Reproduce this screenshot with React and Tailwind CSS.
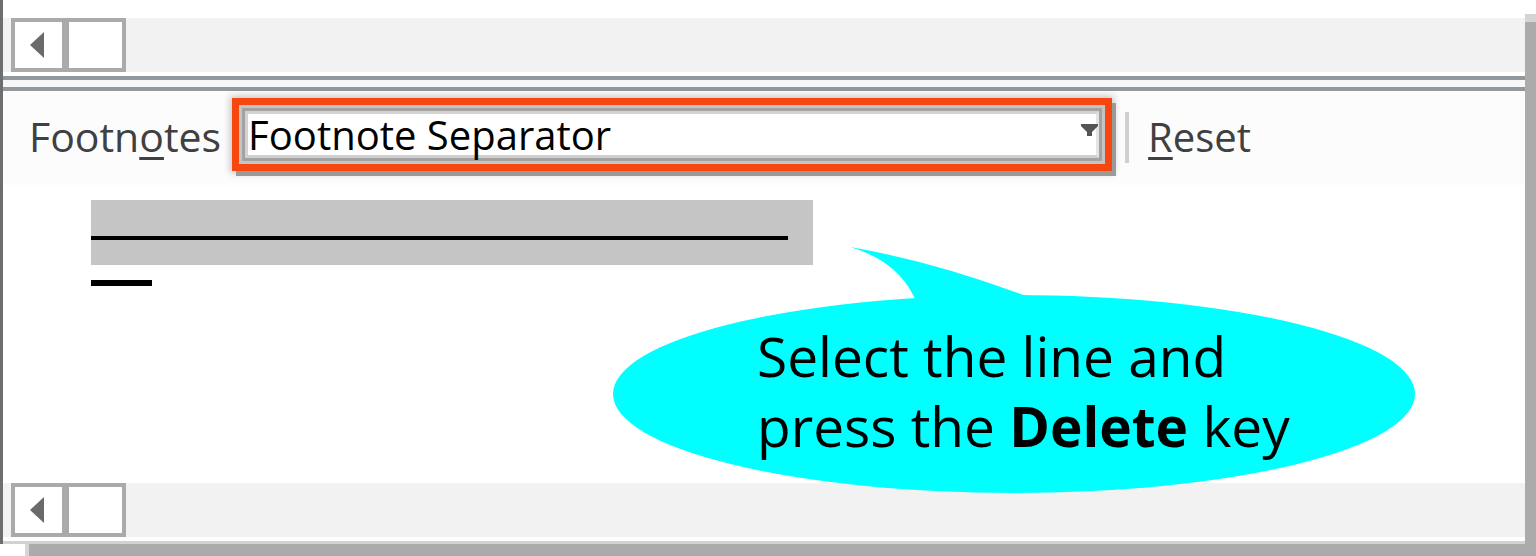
import React from 'react'

const font = { fontFamily: '"Open Sans", "Noto Sans", sans-serif' }

function ScrollButtons() {
  return (
    <div className="ml-[8px] flex h-full w-[115px] border-[4px] border-[#aaaaaa] bg-white">
      <div className="flex w-[47px] items-center justify-center pr-[4px]">
        <svg width="14" height="26" viewBox="0 0 14 26">
          <polygon points="0,13 14,0 14,26" fill="#6a6a6a" />
        </svg>
      </div>
      <div className="w-[7px] bg-[#aaaaaa]" />
      <div className="flex-1" />
    </div>
  )
}

function Bubble() {
  return (
    <div className="absolute left-[597px] top-[240px] h-[260px] w-[830px]">
      <svg className="absolute inset-0" width="830" height="260" viewBox="0 0 830 260">
        <path d="M250,7 Q302,22 318,66 L442,62 Q338,22 250,7 Z" fill="#00ffff" />
        <ellipse cx="414" cy="154" rx="401" ry="99" fill="#00ffff" />
      </svg>
      <div className="absolute left-[157px] top-[81px] text-[55px] leading-[70px] text-black whitespace-nowrap" style={font}>
        <div>Select the line and</div>
        <div>
          press the <span className="font-bold">Delete</span> key
        </div>
      </div>
    </div>
  )
}

export default function App() {
  return (
    <div className="flex h-[556px] w-[1536px] flex-col overflow-hidden bg-white" style={font}>
      <div className="flex h-[544px]">
        <div className="relative flex w-[1525px] flex-col border-l-[3px] border-[#6e6e6e]">
          <div className="h-[18px] bg-white" />
          <div className="h-[54px] bg-[#f2f2f2]">
            <ScrollButtons />
          </div>
          <div className="h-[4px] bg-white" />
          <div className="h-[4px] bg-[#92999e]" />
          <div className="h-[7px] bg-[#f7f7f7]" />
          <div className="h-[4px] bg-[#92999e]" />

          {/* footnote toolbar */}
          <div className="flex h-[94px] items-start bg-[#fcfcfc] pl-[26px]">
            <div className="mt-[25px] text-[41px] leading-[41px] text-[#404040]">
              Footn<span className="underline decoration-[3px] underline-offset-[5px]">o</span>tes
            </div>
            <div className="ml-[11px] mt-[7px] h-[73px] w-[880px] border-[7px] border-[#f5470f] shadow-[4px_5px_0_#9a9a9a,0_0_7px_2px_rgba(0,0,0,0.22)]">
              <div className="h-full border-[3px] border-[#c4c4c4]">
                <div className="h-full border-[3px] border-[#a2a2a2]">
                  <div className="relative h-full border-[3px] border-b-[#cfcfcf] border-l-[#d2d2d2] border-r-[#e4e4e4] border-t-[#d2d2d2] bg-white text-[40px] leading-[41px] text-black">
                    Footnote Separator
                    <svg className="absolute right-[-2px] top-[10px]" width="17" height="12" viewBox="0 0 17 12">
                      <polygon points="0,0 17,0 17,2 11,8 11,12 6,12 6,8 0,2" fill="#555555" />
                    </svg>
                  </div>
                </div>
              </div>
            </div>
            <div className="ml-[13px] mt-[21px] h-[51px] w-[4px] bg-[#d0d0d0]" />
            <div className="ml-[19px] mt-[25px] text-[40px] leading-[41px] text-[#404040]">
              <span className="underline decoration-[3px] underline-offset-[5px]">R</span>eset
            </div>
          </div>

          {/* separator content */}
          <div className="flex h-[298px] flex-col bg-white pl-[88px]">
            <div className="mt-[15px] flex h-[65px] w-[722px] flex-col bg-[#c5c5c5] pt-[36px]">
              <div className="h-[4px] w-[697px] bg-black" />
            </div>
            <div className="mt-[15px] h-[6px] w-[61px] bg-black" />
          </div>

          <div className="h-[54px] bg-[#f2f2f2]">
            <ScrollButtons />
          </div>
          <div className="h-[4px] bg-white" />
          <div className="h-[3px] bg-[#d2d2d2]" />

          <Bubble />
        </div>
        <div className="flex w-[11px] flex-col pt-[14px]">
          <div className="h-[8px] bg-[#d4d4d4]" />
          <div className="flex-1 bg-[#ababab]" />
        </div>
      </div>
      <div className="flex h-[12px]">
        <div className="w-[25px] bg-white" />
        <div className="w-[4px] bg-[#d6d6d6]" />
        <div className="flex-1 bg-[#ababab]" />
      </div>
    </div>
  )
}
